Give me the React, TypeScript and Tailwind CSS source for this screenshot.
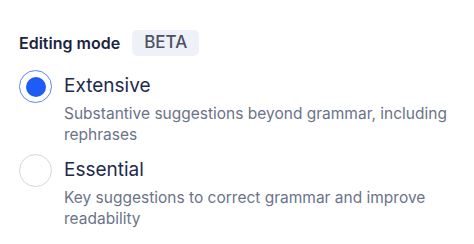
import React from "react";

interface OptionProps {
  label: string;
  description: string;
  checked?: boolean;
}

const Option = ({ label, description, checked }: OptionProps) => (
  <div className="flex gap-3">
    <div
      className={
        checked
          ? "flex h-[33px] w-[33px] shrink-0 items-center justify-center rounded-full border-[1.5px] border-[#5b86f5]"
          : "h-[33px] w-[33px] shrink-0 rounded-full border-[1.5px] border-[#d3d6de]"
      }
    >
      {checked && <div className="h-[20px] w-[20px] rounded-full bg-[#1d5cf5]" />}
    </div>
    <div className="flex flex-col">
      <div className="flex h-[33px] items-center text-[19px] text-[#1e2a4c]">{label}</div>
      <p className="w-[390px] text-[15.5px] leading-[21px] text-[#6b7389]">{description}</p>
    </div>
  </div>
);

export default function App() {
  return (
    <div className="min-h-screen bg-white pl-[19px] pt-[30px] font-['Inter',sans-serif]">
      <div className="flex h-[26px] items-center gap-3">
        <span className="text-[16px] font-semibold text-[#1b2541]">Editing mode</span>
        <span className="flex h-[26px] items-center rounded-[5px] bg-[#eef2f8] px-3 text-[17px] font-medium text-[#4b5162]">
          BETA
        </span>
      </div>
      <div className="mt-[14px] flex flex-col gap-[9px]">
        <Option
          checked
          label="Extensive"
          description="Substantive suggestions beyond grammar, including rephrases"
        />
        <Option
          label="Essential"
          description="Key suggestions to correct grammar and improve readability"
        />
      </div>
    </div>
  );
}
